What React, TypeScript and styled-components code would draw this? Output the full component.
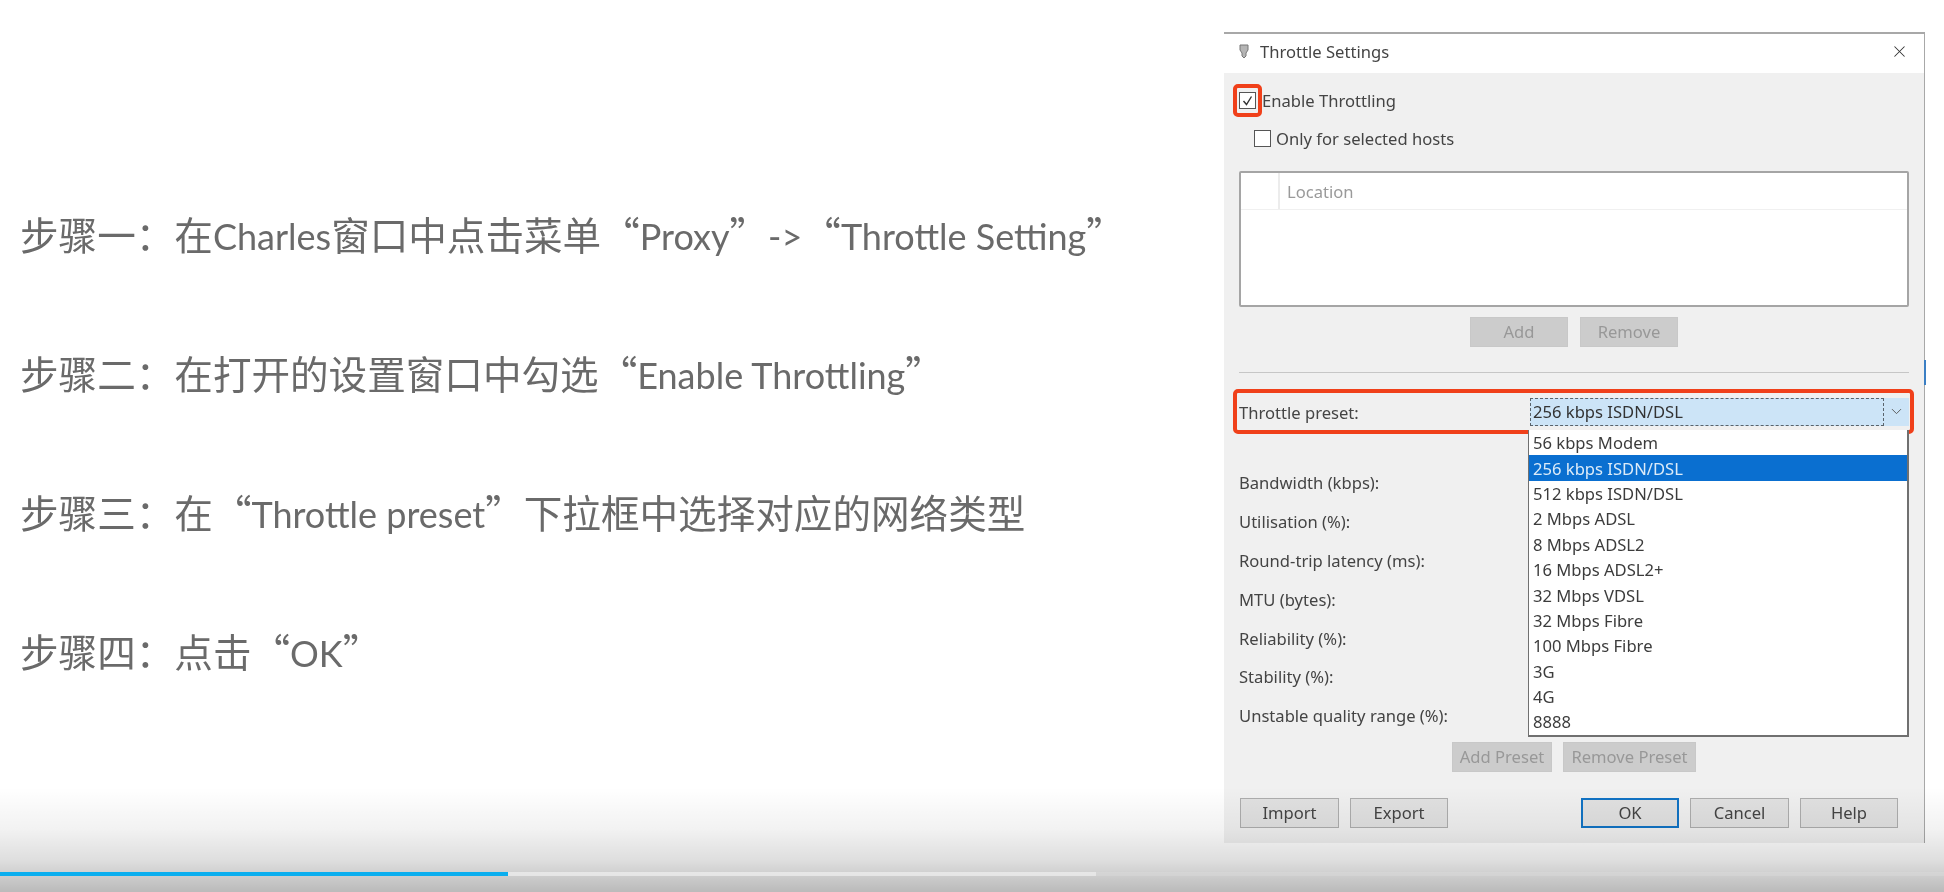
import React from "react";
import styled, { createGlobalStyle } from "styled-components";
import { ChevronDown, X } from "lucide-react";

const GlobalStyle = createGlobalStyle`
  * {
    box-sizing: border-box;
  }

  html,
  body {
    margin: 0;
    padding: 0;
    background: #ffffff;
  }
`;

const Slide = styled.div`
  position: relative;
  display: flex;
  justify-content: space-between;
  width: 1944px;
  height: 892px;
  padding: 32px 19px 0 20px;
  overflow: hidden;
  background: #ffffff;
`;

const Steps = styled.div`
  display: flex;
  flex-direction: column;
  padding-top: 131px;
  filter: blur(0.7px);
`;

const Step = styled.p`
  display: flex;
  align-items: center;
  height: 139px;
  margin: 0;
  font-family: "Noto Sans CJK SC", sans-serif;
  font-size: 38.6px;
  color: #6a6a6a;
  white-space: pre;
`;

const Latin = styled.span`
  font-family: "Lato", sans-serif;
  font-size: 36px;
`;

const Dialog = styled.section`
  position: relative;
  display: flex;
  flex-direction: column;
  width: 701px;
  height: 811px;
  background: #f0f0f0;
  border-top: 2px solid #a8a8a8;
  border-right: 1px solid #a8a8a8;
  font-family: "Noto Sans", sans-serif;
  font-size: 16.6px;
  color: #444444;
  filter: blur(0.7px);
`;

const EdgeMark = styled.i`
  position: absolute;
  top: 326px;
  right: -2px;
  width: 2px;
  height: 25px;
  background: #3b7fc4;
`;

const TitleBar = styled.header`
  display: flex;
  align-items: center;
  height: 39px;
  padding: 0 15px 5px 14px;
  background: #ffffff;
`;

const TitleText = styled.span`
  flex: 1;
  margin-left: 10px;
`;

const Body = styled.div`
  display: flex;
  flex-direction: column;
  padding: 0 15px;
`;

const Highlight = styled.div`
  border: 4px solid #f0401a;
  border-radius: 5px;
`;

const EnableRow = styled.div`
  display: flex;
  align-items: center;
  height: 33px;
  margin-top: 11px;
`;

const CheckHighlight = styled(Highlight)`
  display: flex;
  align-items: center;
  justify-content: center;
  width: 29px;
  height: 33px;
  margin-left: -6px;
`;

const Box = styled.span`
  display: flex;
  align-items: center;
  justify-content: center;
  width: 17px;
  height: 17px;
  background: #ffffff;
  border: 1px solid #555555;
`;

const OnlyRow = styled.label`
  display: flex;
  align-items: center;
  gap: 5px;
  height: 20px;
  margin: 11px 0 0 15px;
`;

const HostsTable = styled.div`
  height: 136px;
  margin-top: 23px;
  background: #ffffff;
  border: 2px solid #a5a5a5;
  border-radius: 2px;
`;

const TableHead = styled.div`
  display: flex;
  height: 37px;
  border-bottom: 1px solid #f0f0f0;
`;

const BlankCol = styled.div`
  width: 39px;
  border-right: 2px solid #ececec;
`;

const LocationCol = styled.div`
  display: flex;
  align-items: center;
  padding-left: 7px;
  color: #9a9a9a;
`;

const CenterButtons = styled.div<{ $top: number; $gap: number }>`
  display: flex;
  justify-content: center;
  gap: ${(p) => p.$gap}px;
  margin-top: ${(p) => p.$top}px;
`;

const Button = styled.button<{ $width: number; $primary?: boolean; $disabled?: boolean }>`
  width: ${(p) => p.$width}px;
  height: 30px;
  padding: 0 0 2px;
  font: inherit;
  color: ${(p) => (p.$disabled ? "#989898" : "#444444")};
  background: ${(p) => (p.$disabled ? "#cccccc" : "#e1e1e1")};
  border: ${(p) =>
    p.$primary ? "2px solid #1173c4" : p.$disabled ? "1px solid #c8c8c8" : "1px solid #adadad"};
`;

const Separator = styled.hr`
  width: 100%;
  height: 1px;
  margin: 25px 0 0;
  background: #c6c6c6;
  border: 0;
`;

const PresetBox = styled(Highlight)`
  position: relative;
  z-index: 1;
  display: flex;
  align-items: center;
  justify-content: space-between;
  height: 45px;
  margin: 16px -5px 0 -6px;
  padding: 1px 1px 0 2px;
`;

const Combo = styled.div`
  display: flex;
  width: 379px;
  height: 28px;
  margin-top: -1px;
  background: #cce4f7;
`;

const ComboValue = styled.div`
  flex: 1;
  display: flex;
  align-items: center;
  padding-left: 2px;
  color: #333333;
  border: 1px dashed #59636b;
`;

const ComboArrow = styled.div`
  display: flex;
  align-items: center;
  justify-content: center;
  width: 25px;
  color: #555555;
`;

const PresetList = styled.ul`
  position: absolute;
  top: 100%;
  right: 1px;
  z-index: -1;
  width: 381px;
  margin: 0;
  padding: 0;
  list-style: none;
  background: #ffffff;
  border: 2px solid #707070;
  border-top: 0;
  border-left-width: 1px;
`;

const PresetItem = styled.li<{ $selected?: boolean }>`
  display: flex;
  align-items: center;
  height: 25.4px;
  padding-left: 4px;
  color: ${(p) => (p.$selected ? "#dcebf8" : "#3c3c3c")};
  background: ${(p) => (p.$selected ? "#0a6fd0" : "transparent")};
`;

const Fields = styled.div`
  display: flex;
  flex-direction: column;
  margin-top: 29px;
`;

const FieldLabel = styled.div`
  display: flex;
  align-items: center;
  height: 38.9px;
`;

const Footer = styled.div`
  display: flex;
  justify-content: space-between;
  margin-top: 26px;
  padding: 0 11px 0 1px;
`;

const ButtonGroup = styled.div`
  display: flex;
  gap: 11px;
`;

const BottomShade = styled.div`
  position: absolute;
  right: 0;
  bottom: 0;
  left: 0;
  height: 105px;
  background: linear-gradient(
    rgba(0, 0, 0, 0) 0%,
    rgba(0, 0, 0, 0.05) 40%,
    rgba(0, 0, 0, 0.13) 70%,
    rgba(0, 0, 0, 0.27) 100%
  );
`;

const Progress = styled.div`
  position: absolute;
  right: 0;
  bottom: 16px;
  left: 0;
  display: flex;
  height: 4px;
  background: rgba(255, 255, 255, 0.12);
`;

const Played = styled.div`
  width: 508px;
  background: #0aaeef;
`;

const Buffered = styled.div`
  width: 588px;
  background: rgba(255, 255, 255, 0.42);
`;

const presets = [
  "56 kbps Modem",
  "256 kbps ISDN/DSL",
  "512 kbps ISDN/DSL",
  "2 Mbps ADSL",
  "8 Mbps ADSL2",
  "16 Mbps ADSL2+",
  "32 Mbps VDSL",
  "32 Mbps Fibre",
  "100 Mbps Fibre",
  "3G",
  "4G",
  "8888",
];

const fields = [
  "Bandwidth (kbps):",
  "Utilisation (%):",
  "Round-trip latency (ms):",
  "MTU (bytes):",
  "Reliability (%):",
  "Stability (%):",
  "Unstable quality range (%):",
];

function ThrottleIcon() {
  return (
    <svg width="12" height="15" viewBox="0 0 12 15">
      <path d="M2 1h8v5l-2 3v3l-2 2-2-2V9L2 6z" fill="#b5b5b5" stroke="#777777" strokeWidth="1" />
    </svg>
  );
}

function CheckMark() {
  return (
    <svg width="13" height="13" viewBox="0 0 13 13">
      <path d="M2.5 7l3 3.5L10.5 2.5" fill="none" stroke="#333333" strokeWidth="1.4" />
    </svg>
  );
}

export default function App(): React.ReactElement {
  return (
    <>
      <GlobalStyle />
      <Slide>
        <Steps>
          <Step>
            <span>
              步骤一：在<Latin>Charles</Latin>窗口中点击菜单“<Latin>Proxy</Latin>”<Latin>-&gt;</Latin>“
              <Latin>Throttle Setting</Latin>”
            </span>
          </Step>
          <Step>
            <span>
              步骤二：在打开的设置窗口中勾选“<Latin>Enable Throttling</Latin>”
            </span>
          </Step>
          <Step>
            <span>
              步骤三：在“<Latin>Throttle preset</Latin>”下拉框中选择对应的网络类型
            </span>
          </Step>
          <Step>
            <span>
              步骤四：点击“<Latin>OK</Latin>”
            </span>
          </Step>
        </Steps>

        <Dialog>
          <EdgeMark />
          <TitleBar>
            <ThrottleIcon />
            <TitleText>Throttle Settings</TitleText>
            <X size={19} strokeWidth={1.3} color="#333333" />
          </TitleBar>
          <Body>
            <EnableRow>
              <CheckHighlight>
                <Box>
                  <CheckMark />
                </Box>
              </CheckHighlight>
              Enable Throttling
            </EnableRow>
            <OnlyRow>
              <Box />
              Only for selected hosts
            </OnlyRow>
            <HostsTable>
              <TableHead>
                <BlankCol />
                <LocationCol>Location</LocationCol>
              </TableHead>
            </HostsTable>
            <CenterButtons $top={10} $gap={12}>
              <Button $width={98} $disabled>Add</Button>
              <Button $width={98} $disabled>Remove</Button>
            </CenterButtons>
            <Separator />
            <PresetBox>
              Throttle preset:
              <Combo>
                <ComboValue>256 kbps ISDN/DSL</ComboValue>
                <ComboArrow>
                  <ChevronDown size={17} strokeWidth={1.3} />
                </ComboArrow>
              </Combo>
              <PresetList>
                {presets.map((preset, i) => (
                  <PresetItem key={preset} $selected={i === 1}>
                    {preset}
                  </PresetItem>
                ))}
              </PresetList>
            </PresetBox>
            <Fields>
              {fields.map((field) => (
                <FieldLabel key={field}>{field}</FieldLabel>
              ))}
            </Fields>
            <CenterButtons $top={7} $gap={11}>
              <Button $width={100} $disabled>Add Preset</Button>
              <Button $width={133} $disabled>Remove Preset</Button>
            </CenterButtons>
            <Footer>
              <ButtonGroup>
                <Button $width={99}>Import</Button>
                <Button $width={98}>Export</Button>
              </ButtonGroup>
              <ButtonGroup>
                <Button $width={98} $primary>OK</Button>
                <Button $width={99}>Cancel</Button>
                <Button $width={98}>Help</Button>
              </ButtonGroup>
            </Footer>
          </Body>
        </Dialog>

        <BottomShade />
        <Progress>
          <Played />
          <Buffered />
        </Progress>
      </Slide>
    </>
  );
}
